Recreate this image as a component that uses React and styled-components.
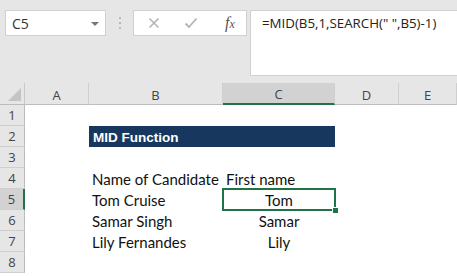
import React from "react";
import styled, { createGlobalStyle } from "styled-components";

const Global = createGlobalStyle`
  html, body { margin: 0; padding: 0; background: #fff; }
  body { font-family: "Open Sans", "Liberation Sans", sans-serif; }
`;

const Page = styled.div`
  width: 457px;
  height: 276px;
  overflow: hidden;
  background: #fff;
`;

const Toolbar = styled.div`
  height: 83px;
  background: #e6e6e6;
  display: flex;
  align-items: flex-start;
  padding: 10px 0 0 5px;
  box-sizing: border-box;
`;

const NameBox = styled.div`
  width: 101px;
  height: 26px;
  box-sizing: border-box;
  background: #fff;
  border: 1px solid #d0d0d0;
  display: flex;
  align-items: center;
  justify-content: space-between;
  padding: 0 6px 0 6px;
  font-family: "Open Sans", sans-serif;
  font-size: 14px;
  color: #333;
`;

const Caret = styled.span`
  width: 0;
  height: 0;
  border-left: 4px solid transparent;
  border-right: 4px solid transparent;
  border-top: 4px solid #777;
  margin-top: 1px;
`;

const Dots = styled.div`
  width: 27px;
  height: 26px;
  display: flex;
  flex-direction: column;
  align-items: center;
  justify-content: center;
  gap: 3px;
  span {
    width: 2px;
    height: 2px;
    background: #b8b8b8;
  }
`;

const FnButtons = styled.div`
  width: 114px;
  height: 26px;
  box-sizing: border-box;
  background: #fff;
  border: 1px solid #d0d0d0;
  display: grid;
  grid-template-columns: 40px 34px 1fr;
  align-items: center;
  justify-items: center;
`;

const Fx = styled.span`
  font-family: "Liberation Serif", serif;
  font-style: italic;
  font-size: 16px;
  color: #555;
  padding-left: 6px;
  small {
    font-size: 12px;
  }
`;

const FormulaInput = styled.div`
  flex: 1;
  height: 66px;
  margin-left: 3px;
  box-sizing: border-box;
  background: #fff;
  border: 1px solid #d0d0d0;
  border-right: none;
  padding: 3px 0 0 11px;
  font-family: "Open Sans", sans-serif;
  font-size: 13.3px;
  color: #222;
  white-space: pre;
`;

const Sheet = styled.div`
  display: grid;
  grid-template-columns: 25px 64px 134px 112px 64px 1fr;
  grid-template-rows: 22px repeat(8, 21px);
`;

const Corner = styled.div`
  background: #e6e6e6;
  border-right: 1px solid #c8c8c8;
  border-bottom: 1px solid #bcbcbc;
  box-sizing: border-box;
  position: relative;
  &::after {
    content: "";
    position: absolute;
    right: 3px;
    bottom: 3px;
    width: 0;
    height: 0;
    border-left: 13px solid transparent;
    border-bottom: 13px solid #c4c4c4;
  }
`;

const ColHead = styled.div`
  box-sizing: border-box;
  background: ${(p) => (p.$active ? "#d2d2d2" : "#e6e6e6")};
  border-right: 1px solid #cfcfcf;
  border-bottom: ${(p) => (p.$active ? "2px solid #217346" : "1px solid #bcbcbc")};
  display: flex;
  align-items: center;
  justify-content: center;
  font-family: "Open Sans", sans-serif;
  font-size: 13px;
  color: #444;
  padding-top: 2px;
`;

const RowHead = styled.div`
  box-sizing: border-box;
  background: ${(p) => (p.$active ? "#d2d2d2" : "#e6e6e6")};
  border-bottom: 1px solid #cfcfcf;
  border-right: ${(p) => (p.$active ? "2px solid #217346" : "1px solid #bcbcbc")};
  display: flex;
  align-items: center;
  justify-content: center;
  font-family: "Open Sans", sans-serif;
  font-size: 13px;
  color: #444;
`;

const Cell = styled.div`
  box-sizing: border-box;
  display: flex;
  align-items: flex-end;
  justify-content: ${(p) => (p.$center ? "center" : "flex-start")};
  padding: 0 3px 0 3px;
  font-family: "Lato", "Liberation Sans", sans-serif;
  font-size: 15px;
  line-height: 19px;
  color: #111;
  white-space: nowrap;
`;

const Title = styled.div`
  grid-column: 3 / 5;
  background: #17375e;
  color: #fff;
  font-family: "Liberation Sans", Arial, sans-serif;
  font-weight: bold;
  font-size: 13.5px;
  display: flex;
  align-items: center;
  padding: 1px 0 0 4px;
`;

const Selected = styled(Cell)`
  position: relative;
  outline: 2px solid #217346;
  outline-offset: -1px;
  &::after {
    content: "";
    position: absolute;
    right: -4px;
    bottom: -4px;
    width: 5px;
    height: 5px;
    background: #217346;
    border: 1px solid #fff;
  }
`;

const cols = ["A", "B", "C", "D", "E"];

const rows = {
  4: ["Name of Candidate", "First name"],
  5: ["Tom Cruise", "Tom"],
  6: ["Samar Singh", "Samar"],
  7: ["Lily Fernandes", "Lily"],
};

export default function App() {
  return (
    <Page>
      <Global />
      <Toolbar>
        <NameBox>
          C5
          <Caret />
        </NameBox>
        <Dots>
          <span />
          <span />
          <span />
        </Dots>
        <FnButtons>
          <svg width="12" height="12" viewBox="0 0 12 12">
            <path d="M1.5 1.5 L10.5 10.5 M10.5 1.5 L1.5 10.5" stroke="#b4b4b4" strokeWidth="1.6" fill="none" />
          </svg>
          <svg width="14" height="12" viewBox="0 0 14 12">
            <path d="M1.5 6.5 L5 10 L12.5 1.5" stroke="#b4b4b4" strokeWidth="1.8" fill="none" />
          </svg>
          <Fx>
            f<small>x</small>
          </Fx>
        </FnButtons>
        <FormulaInput>=MID(B5,1,SEARCH(" ",B5)-1)</FormulaInput>
      </Toolbar>
      <Sheet>
        <Corner />
        {cols.map((c) => (
          <ColHead key={c} $active={c === "C"}>
            {c}
          </ColHead>
        ))}
        {[1, 2, 3, 4, 5, 6, 7, 8].map((r) => (
          <React.Fragment key={r}>
            <RowHead $active={r === 5}>{r}</RowHead>
            <Cell />
            {r === 2 ? (
              <Title>MID Function</Title>
            ) : (
              <>
                <Cell>{rows[r] ? rows[r][0] : ""}</Cell>
                {r === 5 ? (
                  <Selected $center>{rows[r][1]}</Selected>
                ) : (
                  <Cell $center={r !== 4}>{rows[r] ? rows[r][1] : ""}</Cell>
                )}
              </>
            )}
            <Cell />
            <Cell />
          </React.Fragment>
        ))}
      </Sheet>
    </Page>
  );
}
